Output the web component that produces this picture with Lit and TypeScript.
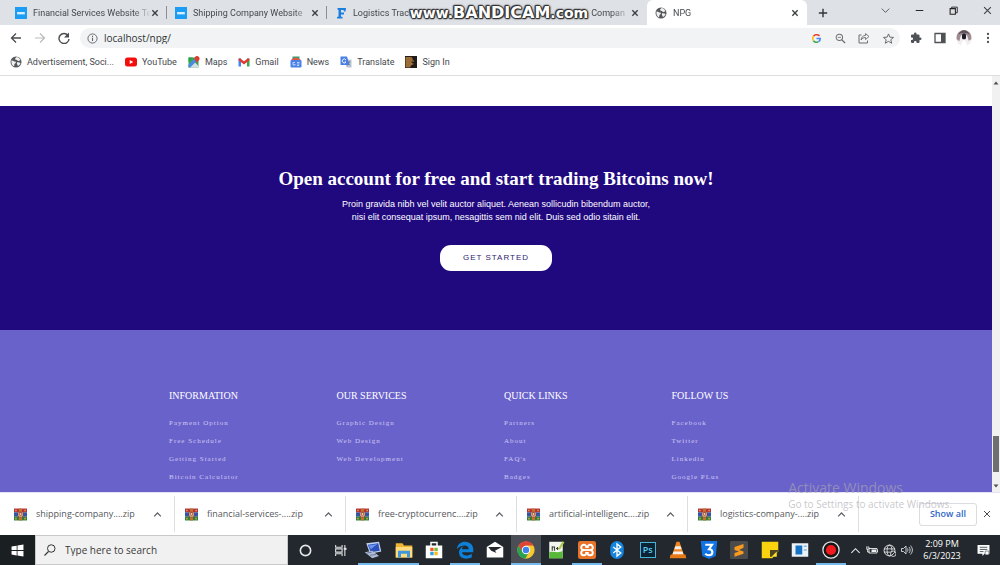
import { LitElement, html, svg, css, TemplateResult, SVGTemplateResult } from "lit";
import { customElement } from "lit/decorators.js";
import { classMap } from "lit/directives/class-map.js";

const icon = (size: number, body: SVGTemplateResult, box = 24): TemplateResult =>
  html`<svg width=${size} height=${size} viewBox="0 0 ${box} ${box}" fill="none" aria-hidden="true">${body}</svg>`;

const globe = svg`<circle cx="12" cy="12" r="11" fill="#54575b"/><path d="M3 9c3-1 4 2 7 2s2 3 0 4-1 4-2 6C4 19 2 14 3 9ZM13 2c-1 2-3 2-3 4s4 1 5 3 3 1 6-1c-2-4-5-6-8-6ZM14 13c2-1 5 0 7 1-1 3-3 5-5 6-1-2-3-5-2-7Z" fill="#f1f1f1"/>`;
const nicepage = svg`<rect width="24" height="24" fill="#1b9df5"/><path d="M4 10h16v5H4z" fill="#a9dcff"/><path d="M5 12h13" stroke="#fff" stroke-width="2"/>`;
const letterF = svg`<path d="M5 2h17l-1 7h-3l-1-3h-5v5h6v4h-6v4l3 1v3H4v-3l3-1V6L5 5Z" fill="#1c7fe0"/>`;
const cross = svg`<path d="m4 4 16 16M20 4 4 20" stroke="#3c4043" stroke-width="4"/>`;
const thinCross = svg`<path d="m3 3 18 18M21 3 3 21" stroke="#3c4043" stroke-width="2.8"/>`;
const chevronUp = svg`<path d="m3 17 9-9 9 9" stroke="#5f6368" stroke-width="3.4"/>`;
const archive = svg`<path d="M0 1h24v7H0z" fill="#b3303c"/><path d="M0 8h24v8H0z" fill="#3454a4"/><path d="M0 16h24v7H0z" fill="#24813e"/><path d="M9 1h6v22H9z" fill="#c4702b"/><path d="M7 7h10v10H7z" fill="#9a3d2c"/><path d="M9 8v7h6V8M12 9v4" stroke="#f4e4bb" stroke-width="1.6"/><path d="M2 3h3v3H2zM19 3h3v3h-3zM2 18h3v3H2zM19 18h3v3h-3z" fill="#d8a13c"/>`;

const art = {
  back: svg`<path d="M22 12H3m9-9-9 9 9 9" stroke="#4a4d51" stroke-width="2.6"/>`,
  forward: svg`<path d="M2 12h19m-9-9 9 9-9 9" stroke="#b9bbbe" stroke-width="2.4"/>`,
  reload: svg`<path d="M20 7a10 10 0 1 0 2 7" stroke="#4a4d51" stroke-width="2.8"/><path d="M22 1v10H12z" fill="#4a4d51"/>`,
  info: svg`<circle cx="12" cy="12" r="10" stroke="#5f6368" stroke-width="2"/><path d="M12 10.500v7M12 6v2.500" stroke="#5f6368" stroke-width="2.400"/>`,
  google: svg`<path d="M20 5a10.500 10.500 0 0 0-16 1" stroke="#ea4335" stroke-width="4"/><path d="M4 6a10.500 10.500 0 0 0 0 12" stroke="#fbbc05" stroke-width="4"/><path d="M4 18a10.500 10.500 0 0 0 14 2" stroke="#34a853" stroke-width="4"/><path d="M12 12h10c0 4-2 6.500-4 8" stroke="#4285f4" stroke-width="4"/>`,
  zoom: svg`<circle cx="9.500" cy="9.500" r="7" stroke="#6a6d71" stroke-width="2.200"/><path d="m15 15 7 7" stroke="#6a6d71" stroke-width="3"/><path d="M6 9.500h7" stroke="#6a6d71" stroke-width="1.800"/>`,
  share: svg`<path d="M7 6H2v16h17v-5" stroke="#6a6d71" stroke-width="2"/><path d="M15 3l7 6-7 6v-4c-4 0-7 2-9 5 1-6 4-9 9-9Z" stroke="#6a6d71" stroke-width="1.800"/>`,
  star: svg`<path d="m12 2 3 7 8 .7-6 5 2 7.600-7-4-7 4 2-7.600-6-5L9 9Z" stroke="#5f6368" stroke-width="2"/>`,
  puzzle: svg`<path d="M20.500 11H19V7a2 2 0 0 0-2-2h-4V3.500a2.500 2.500 0 0 0-5 0V5H4a2 2 0 0 0-2 2v3.800h1.500a2.700 2.700 0 0 1 0 5.400H2V20a2 2 0 0 0 2 2h3.800v-1.500a2.700 2.700 0 0 1 5.400 0V22H17a2 2 0 0 0 2-2v-4h1.500a2.500 2.500 0 0 0 0-5Z" fill="#4f5256"/>`,
  panel: svg`<path d="M2 3h20v18H2z" stroke="#4f5256" stroke-width="2.600"/><path d="M14 3h8v18h-8z" fill="#4f5256"/>`,
  avatar: svg`<circle cx="12" cy="12" r="12" fill="#f3eff1"/><path d="M1 14C0 4 7 0 12 0s12 4 11 14l-4 2-2-7-5-4-5 4-2 8Z" fill="#a08d93"/><path d="M3 7c5-9 13-9 18 0l-4-2-5-1-5 1Z" fill="#5c5158"/><path d="M9 8c0-4 6-4 6 0v4l-1 2h-4l-1-2Z" fill="#1d1d2a"/><path d="M8 24c0-6 2-8 4-9 2 1 4 3 4 9Z" fill="#fff"/>`,
  dots: svg`<circle cx="12" cy="4" r="2.300" fill="#4f5256"/><circle cx="12" cy="12" r="2.300" fill="#4f5256"/><circle cx="12" cy="20" r="2.300" fill="#4f5256"/>`,
  plus: svg`<path d="M12 2v20M2 12h20" stroke="#33363a" stroke-width="3.400"/>`,
  chevronDown: svg`<path d="m2 7 10 10L22 7" stroke="#4f5256" stroke-width="2.400"/>`,
  minimise: svg`<path d="M2 12h20" stroke="#222" stroke-width="2.600"/>`,
  restore: svg`<path d="M3 7h14v15H3z" stroke="#222" stroke-width="2.800"/><path d="M7 6V3h15v15h-4" stroke="#222" stroke-width="2.400"/>`,
  youtube: svg`<rect y="3" width="24" height="18" rx="5" fill="#f30d0d"/><path d="m9.500 8 7 4-7 4Z" fill="#fff"/>`,
  maps: svg`<rect x="1" y="3" width="20" height="20" rx="1" fill="#36a853"/><path d="M4 23 14 13l7 7v3Z" fill="#d8dde3"/><path d="M1 17 15 4l4 4L4 23H1Z" fill="#4b89ef"/><path d="M1 3h9L1 12Z" fill="#2f9e4c"/><path d="M18 0a5 5 0 0 1 5 6c0 3-4 4-5 8-1-4-5-5-5-8a5 5 0 0 1 5-6Z" fill="#df3b2f"/>`,
  gmail: svg`<path d="M1 5h5v16H1z" fill="#4285f4"/><path d="M18 5h5v16h-5z" fill="#34a853"/><path d="m2 6 10 8 10-8" stroke="#e33a2e" stroke-width="5"/>`,
  news: svg`<path d="M5 1h14v7H5z" fill="#34a06c"/><path d="m3 6 9-3 9 4v4H3z" fill="#e65347"/><rect x="1" y="8" width="22" height="15" rx="2" fill="#4a82e8"/><path d="M10 13H6v5h4v-2M14 13h5M14 16h5M14 19h4" stroke="#dce9ff" stroke-width="1.600"/>`,
  translate: svg`<path d="M10 7h13v16H13z" fill="#bcc5d1"/><path d="M1 1h13l5 17H1z" fill="#4a80e4"/><path d="M12 8a4 4 0 1 0 0 4H9" stroke="#e9f1ff" stroke-width="2"/><path d="M15 12h6m-3-2v2c0 3-1 5-3 7m1-4 4 4" stroke="#5b7bab" stroke-width="1.500"/>`,
  signin: svg`<path d="M0 0h24v24H0z" fill="#221b19"/><path d="M1 2h12l3 5-4 4 3 4-5 8H1z" fill="#9a6c36"/><path d="M12 10h6M12 16h5" stroke="#b98446" stroke-width="2"/>`,
  windows: svg`<path d="M1 4.500 10.500 3v8.300H1ZM12 2.800 23 1v10.300H12ZM1 12.700h9.500V21L1 19.500ZM12 12.700h11V23l-11-1.800Z" fill="#fff"/>`,
  search: svg`<circle cx="14.500" cy="9" r="7.500" stroke="#333" stroke-width="2"/><path d="m9 15-8 8" stroke="#333" stroke-width="2.200"/>`,
  cortana: svg`<circle cx="12" cy="12" r="9.500" stroke="#e6e8ea" stroke-width="3"/>`,
  taskview: svg`<path d="M3 2v4h12V2M3 22v-4h12v4M3 9h12v6H3z" stroke="#dfe2e4" stroke-width="2"/><path d="M20 2v20" stroke="#dfe2e4" stroke-width="2"/><path d="M18 7h5v4h-5z" fill="#dfe2e4"/>`,
  remote: svg`<path d="m3 3 17-2 3 13-15 3Z" fill="#c5d3f4"/><path d="m5 5 14-2 2 10-12 2Z" fill="#2b50b8"/><path d="m6 6 12-2-9 7Z" fill="#6c93ed"/><path d="m1 15 10-2 9 7-9 3Z" fill="#aebbd4"/><path d="m4 16 6-1m-2 4 8-1" stroke="#56678d"/>`,
  explorer: svg`<path d="M1 3h9l2 3h11v16H1z" fill="#efb532"/><path d="M1 8h22v14H1z" fill="#ffdb7b"/><path d="M4 13h16v9h-4v-5H8v5H4z" fill="#4098dc"/>`,
  store: svg`<path d="M8 7V2h8v5" stroke="#fff" stroke-width="2"/><path d="M1 6h22v17H1z" fill="#fff"/><path d="M7 9h4.500v4.500H7z" fill="#ee5a27"/><path d="M12.500 9H17v4.500h-4.500z" fill="#7aba35"/><path d="M7 14.500h4.500V19H7z" fill="#2ba3df"/><path d="M12.500 14.500H17V19h-4.500z" fill="#f7b928"/>`,
  edge: svg`<path d="M1 11C2 4 7 1 12 1c7 0 11 5 11 10v4H8c1 6 9 5 13 2v5c-7 3-17 2-17-7 0-4 3-7 6-8-2 2-2 3-2 4h9c0-7-11-6-16 0Z" fill="#0d80d8"/>`,
  mail: svg`<path d="m1 8 11-7 11 7v14H1z" fill="#fff"/><path d="M3 8h18l-9 5 2 3-7-3z" fill="#23292d"/>`,
  chrome: svg`<circle cx="12" cy="12" r="11.500" fill="#f7c82e"/><path d="M2 6a11.500 11.500 0 0 1 20 0H12L7 15Z" fill="#dd4637"/><path d="M2 6a11.500 11.500 0 0 0 9 17.500L16.500 14 7 14Z" fill="#2ca150"/><circle cx="12" cy="12" r="5.600" fill="#fff"/><circle cx="12" cy="12" r="4.300" fill="#4183ee"/>`,
  notepad: svg`<path d="M3 1h18v22H3z" fill="#f3f6ee"/><path d="M3 15c6-2 12 2 18-2v10H3z" fill="#58b938"/><path d="M7 7v6m0-5h3v5m2-3h4m-2-2v4" stroke="#38433c" stroke-width="1.500"/><path d="m22 1-6 10" stroke="#abc94b" stroke-width="3"/>`,
  xampp: svg`<rect width="24" height="24" rx="3" fill="#e8742a"/><path d="M8 5c-5 0-5 7 0 7-5 0-5 7 0 7 3 0 3-3 3-3h2s0 3 3 3c5 0 5-7 0-7 5 0 5-7 0-7-3 0-3 3-3 3h-2s0-3-3-3Z" stroke="#fff" stroke-width="2.600"/><path d="M8 12h8" stroke="#fff" stroke-width="2.400"/>`,
  bluetooth: svg`<rect x="3" width="18" height="24" rx="9" fill="#1584dc"/><path d="m7 8 10 8-5 4V4l5 4-10 8" stroke="#fff" stroke-width="1.800"/>`,
  vlc: svg`<path d="M10 1h4l6 18H4z" fill="#ef8420"/><path d="m8.500 7 7 0 1.300 4H7.200zM6 14h12l1.300 4H4.700z" fill="#f4f0e9"/><path d="M2 18h20l1 5H1z" fill="#e77917"/>`,
  css3: svg`<path d="M1 0h22l-2 20-9 4-9-4Z" fill="#1173e4"/><path d="M7 5h9l-4 6c6 0 6 8 0 8-3 0-4-1-5-2" stroke="#fff" stroke-width="2.800"/>`,
  sublime: svg`<rect width="24" height="24" rx="2" fill="#4b4b4b"/><path d="m6 8 12-4v5l-6 3 6 2v3L6 21v-5l6-2-6-2Z" fill="#f79a1e"/>`,
  sticky: svg`<path d="M1 1h22v13l-8 9H1z" fill="#fbd40f"/><path d="M12 12h11l-2 9h-9z" fill="#4e471e"/><path d="m14 21 7-7v7Z" fill="#ffdc32"/>`,
  photos: svg`<path d="M1 3h22v18H1z" fill="#eaf2f8"/><path d="M6 6h9v12H6z" fill="#1672c4"/><path d="M17 6h4v2h-4zM17 11h4v2h-4z" fill="#8bb5d6"/>`,
  record: svg`<circle cx="12" cy="12" r="10.800" fill="#161616" stroke="#e6e6e6" stroke-width="1.700"/><circle cx="12" cy="12" r="6.800" fill="#ef1b1f"/>`,
  trayUp: svg`<path d="m3 17 9-9 9 9" stroke="#e8eaec" stroke-width="2.400"/>`,
  battery: svg`<path d="M6 9h16v9H6zM22 12h2v3h-2" stroke="#eef0f1" stroke-width="1.800"/><path d="M11 11h9v5h-9z" fill="#eef0f1"/><path d="M0 6h6v4H0zM3 10v6h4" stroke="#eef0f1" stroke-width="1.600"/>`,
  network: svg`<circle cx="12" cy="12" r="10" stroke="#eef0f1" stroke-width="1.700"/><ellipse cx="12" cy="12" rx="4.500" ry="10" stroke="#eef0f1" stroke-width="1.500"/><path d="M2 9h20M2 15h20" stroke="#eef0f1" stroke-width="1.500"/><circle cx="19" cy="18" r="5" fill="#22282d" stroke="#eef0f1" stroke-width="1.500"/><path d="m16 21 6-6" stroke="#eef0f1" stroke-width="1.500"/>`,
  volume: svg`<path d="M1 9h4l5-5v16l-5-5H1z" stroke="#e6e8ea" stroke-width="1.700"/><path d="M13 9c1 2 1 4 0 6m3-9c3 4 3 8 0 12m3-15c5 6 5 12 0 18" stroke="#e6e8ea" stroke-width="1.700"/>`,
  notice: svg`<path d="M1 2h22v16h-9l-4 4v-4H1z" fill="#fff"/><path d="M5 6h14M5 10h14M5 14h7" stroke="#30363b" stroke-width="1.500"/><path d="M15 13h7v7h-7z" fill="#fff" stroke="#30363b"/>`,
};

interface Tab { title: string; mark: SVGTemplateResult | null; active?: boolean; trailing?: boolean }

const tabs: Tab[] = [
  { title: "Financial Services Website Te", mark: nicepage },
  { title: "Shipping Company Website", mark: nicepage },
  { title: "Logistics Track", mark: letterF },
  { title: "Compan", mark: null, trailing: true },
  { title: "NPG", mark: globe, active: true },
];

const bookmarks = [
  { label: "Advertisement, Soci...", mark: globe },
  { label: "YouTube", mark: art.youtube },
  { label: "Maps", mark: art.maps },
  { label: "Gmail", mark: art.gmail },
  { label: "News", mark: art.news },
  { label: "Translate", mark: art.translate },
  { label: "Sign In", mark: art.signin },
];

const columns = [
  { heading: "INFORMATION", links: ["Payment Option", "Free Schedule", "Getting Started", "Bitcoin Calculator"] },
  { heading: "OUR SERVICES", links: ["Graphic Design", "Web Design", "Web Development"] },
  { heading: "QUICK LINKS", links: ["Partners", "About", "FAQ's", "Badges"] },
  { heading: "FOLLOW US", links: ["Facebook", "Twitter", "Linkedin", "Google PLus"] },
];

const downloads = [
  "shipping-company....zip",
  "financial-services-....zip",
  "free-cryptocurrenc....zip",
  "artificial-intelligenc....zip",
  "logistics-company-....zip",
];

const reset = css`
  *, *::before, *::after { box-sizing: border-box; }
  button, input { font: inherit; color: inherit; border: 0; padding: 0; margin: 0; background: none; outline: 0; min-width: 0; }
  a { color: inherit; text-decoration: none; }
  svg { display: block; flex: none; }
  button { display: flex; align-items: center; justify-content: center; }
`;

@customElement("browser-chrome")
class BrowserChrome extends LitElement {
  static styles = [reset, css`
    :host { display: block; flex: none; font: 9px/12px Roboto, "Open Sans", sans-serif; color: #45484c; }
    .strip { display: flex; height: 25px; background: #dee1e6; padding-left: 7px; }
    .tab { flex: 0 1 160px; min-width: 0; display: flex; align-items: center; padding: 0 8px; position: relative; }
    .tab:not(.active):not(.trailing)::after { content: ""; position: absolute; right: 0; top: 6px; height: 13px; width: 1px; background: #8d9197; }
    .active { background: #fff; border-radius: 6px 6px 0 0; }
    .title { flex: 1; min-width: 0; margin-left: 6px; overflow: hidden; white-space: nowrap; mask-image: linear-gradient(90deg, #000 85%, transparent); }
    .trailing .title { text-align: right; padding-right: 6px; }
    .add { width: 32px; }
    .window { margin-left: auto; margin-right: -4px; display: flex; }
    .window button { width: 34px; padding-bottom: 4px; }
    .toolbar { display: flex; align-items: center; height: 26px; background: #fff; padding-left: 4px; }
    .toolbar > button { flex: none; width: 24px; height: 24px; }
    .address { flex: 1; display: flex; align-items: center; height: 20px; margin: 0 4px; padding: 0 3px 0 7px; border-radius: 10px; background: #f1f3f4; gap: 6px; }
    .address input { flex: 1; font-family: "Open Sans", "Noto Sans", sans-serif; font-size: 10px; color: #303336; }
    .address button { width: 18px; height: 18px; }
    .bookmarks { display: flex; align-items: center; height: 25px; gap: 11px; padding: 0 10px 2px; background: #fff; border-bottom: 1px solid #dcdee0; }
    .bookmarks a { display: flex; align-items: center; gap: 5px; white-space: nowrap; }
  `];

  render() {
    return html`
      <div class="strip" role="tablist">
        ${tabs.map((t) => html`
          <div class=${classMap({ tab: true, active: !!t.active, trailing: !!t.trailing })} role="tab">
            ${t.mark ? icon(12, t.mark) : ""}
            <span class="title">${t.title}</span>
            <button aria-label="Close tab">${icon(8, cross)}</button>
          </div>`)}
        <button class="add" aria-label="New tab">${icon(10, art.plus)}</button>
        <div class="window">
          <button aria-label="Search tabs">${icon(9, art.chevronDown)}</button>
          <button aria-label="Minimise">${icon(9, art.minimise)}</button>
          <button aria-label="Restore">${icon(9, art.restore)}</button>
          <button aria-label="Close">${icon(9, thinCross)}</button>
        </div>
      </div>
      <div class="toolbar">
        <button aria-label="Back">${icon(12, art.back)}</button>
        <button aria-label="Forward">${icon(12, art.forward)}</button>
        <button aria-label="Reload">${icon(12, art.reload)}</button>
        <div class="address">
          ${icon(11, art.info)}
          <input aria-label="Address" value="localhost/npg/" />
          <button aria-label="Search with Google">${icon(9, art.google)}</button>
          <button aria-label="Zoom">${icon(11, art.zoom)}</button>
          <button aria-label="Share">${icon(12, art.share)}</button>
          <button aria-label="Bookmark">${icon(11, art.star)}</button>
        </div>
        <button aria-label="Extensions">${icon(12, art.puzzle)}</button>
        <button aria-label="Side panel">${icon(12, art.panel)}</button>
        <button aria-label="Profile">${icon(16, art.avatar)}</button>
        <button aria-label="Menu">${icon(12, art.dots)}</button>
      </div>
      <nav class="bookmarks">
        ${bookmarks.map((b) => html`<a href="#">${icon(12, b.mark)}<span>${b.label}</span></a>`)}
      </nav>`;
  }
}

@customElement("site-page")
class SitePage extends LitElement {
  static styles = [reset, css`
    :host { display: flex; flex: 1; min-height: 0; overflow: hidden; background: #fff; }
    .content { flex: 1; min-width: 0; display: flex; flex-direction: column; padding-top: 30px; }
    .cta { flex: none; background: #20087f; color: #fff; text-align: center; padding: 60px 20px 59px; display: flex; flex-direction: column; align-items: center; }
    h2 { margin: 0; font: bold 19px/26px "Liberation Serif", serif; }
    p { margin: 6px 0 21px; font: 9px/13px "Liberation Sans", sans-serif; }
    .start { height: 26px; padding: 0 23px; border-radius: 11px; background: #fff; color: #2c2470; font: 8px/26px "Liberation Sans", sans-serif; letter-spacing: 1px; }
    footer { flex: 1 0 auto; background: #6a62cb; color: #fff; font-family: "Liberation Serif", serif; padding: 60px 20px 8px; }
    .columns { max-width: 670px; margin: 0 auto; display: grid; grid-template-columns: repeat(4, 1fr); }
    .column { padding: 0 8px; }
    h3 { margin: 0 0 12px; font-size: 10px; line-height: 12px; font-weight: 400; }
    ul { list-style: none; margin: 0; padding: 0; font-size: 7px; line-height: 18px; letter-spacing: 1px; color: #cdc8f2; }
    li { height: 18px; margin: 0; }
    .bar { flex: none; width: 8px; background: #f1f1f1; display: flex; flex-direction: column; align-items: center; padding: 4px 0 3px; }
    .room { flex: 1; }
    .thumb { width: 6px; height: 36px; background: #6f6f72; margin-bottom: 11px; }
  `];

  render() {
    return html`
      <main class="content">
        <section class="cta">
          <h2>Open account for free and start trading Bitcoins now!</h2>
          <p>Proin gravida nibh vel velit auctor aliquet. Aenean sollicudin bibendum auctor,<br />nisi elit consequat ipsum, nesagittis sem nid elit. Duis sed odio sitain elit.</p>
          <button class="start">GET STARTED</button>
        </section>
        <footer>
          <div class="columns">
            ${columns.map((c) => html`
              <div class="column">
                <h3>${c.heading}</h3>
                <ul>${c.links.map((l) => html`<li><a href="#">${l}</a></li>`)}</ul>
              </div>`)}
          </div>
        </footer>
      </main>
      <div class="bar">
        ${icon(6, svg`<path d="m2 18 10-12 10 12Z" fill="#505050"/>`)}
        <span class="room"></span>
        <span class="thumb"></span>
        ${icon(6, svg`<path d="m2 6 10 12L22 6Z" fill="#505050"/>`)}
      </div>`;
  }
}

@customElement("download-shelf")
class DownloadShelf extends LitElement {
  static styles = [reset, css`
    :host { display: flex; flex: none; align-items: center; height: 42px; background: #fff; border-top: 1px solid #e4e2f4; padding: 0 8px 0 4px; font: 9px/14px "Open Sans", "Noto Sans", sans-serif; color: #55585c; }
    .item { flex: 0 1 171px; min-width: 0; height: 36px; display: flex; align-items: center; border-right: 1px solid #dcdee0; padding: 0 12px 0 10px; gap: 9px; }
    .name { flex: 1; justify-content: flex-start; white-space: nowrap; }
    .all { margin-left: auto; height: 23px; padding: 0 10px; border: 1px solid #dadce0; border-radius: 3px; color: #2f66c8; font-weight: 600; white-space: nowrap; }
    .close { margin-left: 5px; width: 10px; }
  `];

  render() {
    return html`
      ${downloads.map((d) => html`
        <div class="item">
          ${icon(13, archive)}
          <button class="name">${d}</button>
          <button aria-label="More options">${icon(9, chevronUp)}</button>
        </div>`)}
      <button class="all">Show all</button>
      <button class="close" aria-label="Close downloads">${icon(8, thinCross)}</button>`;
  }
}

const pinned: { name: string; mark: SVGTemplateResult | null; open?: boolean; current?: boolean }[] = [
  { name: "Remote Desktop", mark: art.remote, open: true },
  { name: "File Explorer", mark: art.explorer, open: true },
  { name: "Store", mark: art.store },
  { name: "Edge", mark: art.edge, open: true },
  { name: "Mail", mark: art.mail },
  { name: "Chrome", mark: art.chrome, open: true, current: true },
  { name: "Notepad++", mark: art.notepad },
  { name: "XAMPP", mark: art.xampp, open: true },
  { name: "Bluetooth", mark: art.bluetooth },
  { name: "Photoshop", mark: null },
  { name: "VLC", mark: art.vlc },
  { name: "CSS3", mark: art.css3 },
  { name: "Sublime Text", mark: art.sublime },
  { name: "Sticky Notes", mark: art.sticky },
  { name: "Photos", mark: art.photos },
  { name: "Bandicam", mark: art.record, open: true },
];

@customElement("task-bar")
class TaskBar extends LitElement {
  static styles = [reset, css`
    :host { display: flex; flex: none; height: 30px; background: #22282d; color: #fff; font: 9px/12px "Open Sans", "Noto Sans", sans-serif; }
    .start { width: 35px; background: #1a1f22; }
    .search { width: 253px; display: flex; align-items: center; gap: 9px; padding: 0 8px; background: #f1f1f1; border: 1px solid #c9c9c9; color: #333; }
    .search input { flex: 1; font-size: 10px; }
    .search input::placeholder { color: #3a3a3a; opacity: 1; }
    .tool { width: 35px; }
    .apps { flex: 1; display: grid; grid-template-columns: repeat(16, 1fr); }
    .app { border-top: 2px solid transparent; border-bottom: 2px solid transparent; }
    .open { border-bottom-color: #76b9ed; }
    .current { background: #4b4f55; border-top-color: #4b4f55; }
    .ps { width: 16px; height: 16px; border: 1px solid #44b5d8; background: #0b2334; color: #58c8ee; line-height: 14px; font-weight: 600; }
    .tray { display: flex; align-items: center; gap: 5px; padding-left: 4px; }
    .clock { width: 48px; text-align: center; white-space: nowrap; }
    .notice { width: 34px; }
  `];

  render() {
    return html`
      <button class="start" aria-label="Start">${icon(13, art.windows)}</button>
      <label class="search">${icon(12, art.search)}<input aria-label="Search" placeholder="Type here to search" /></label>
      <button class="tool" aria-label="Cortana">${icon(13, art.cortana)}</button>
      <button class="tool" aria-label="Task view">${icon(13, art.taskview)}</button>
      <div class="apps">
        ${pinned.map((a) => html`
          <button class=${classMap({ app: true, open: !!a.open, current: !!a.current })} aria-label=${a.name}>
            ${a.mark ? icon(18, a.mark) : html`<span class="ps">Ps</span>`}
          </button>`)}
      </div>
      <div class="tray">
        <button aria-label="Hidden icons">${icon(11, art.trayUp)}</button>
        <button aria-label="Battery">${icon(12, art.battery)}</button>
        <button aria-label="Network">${icon(13, art.network)}</button>
        <button aria-label="Volume">${icon(12, art.volume)}</button>
        <div class="clock">2:09 PM<br />6/3/2023</div>
      </div>
      <button class="notice" aria-label="Notifications">${icon(13, art.notice)}</button>`;
  }
}

@customElement("app-root")
class AppRoot extends LitElement {
  static styles = css`
    :host { display: flex; flex-direction: column; height: 100vh; position: relative; overflow: hidden; }
    .recorder { position: absolute; top: 3px; left: 0; right: 2px; text-align: center; font: bold 14px/19px "DejaVu Sans", sans-serif; color: #fff; white-space: nowrap; pointer-events: none;
      text-shadow: 1px 0 1px #333, -1px 0 1px #333, 0 1px 1px #333, 0 -1px 1px #333, 1px 1px 1px #333, -1px -1px 1px #333, 0 0 3px #444; }
    .brand { font-size: 16px; }
    .activate { position: absolute; right: 48px; bottom: 54px; color: rgba(168, 168, 176, 0.65); font: 10px/14px "Open Sans", "Noto Sans", sans-serif; white-space: nowrap; pointer-events: none; }
    .activate strong { display: block; font-size: 14px; line-height: 18px; font-weight: 400; }
  `;

  render() {
    return html`
      <browser-chrome></browser-chrome>
      <site-page></site-page>
      <download-shelf></download-shelf>
      <task-bar></task-bar>
      <div class="recorder">www.<span class="brand">BANDICAM</span>.com</div>
      <div class="activate"><strong>Activate Windows</strong>Go to Settings to activate Windows.</div>`;
  }
}
